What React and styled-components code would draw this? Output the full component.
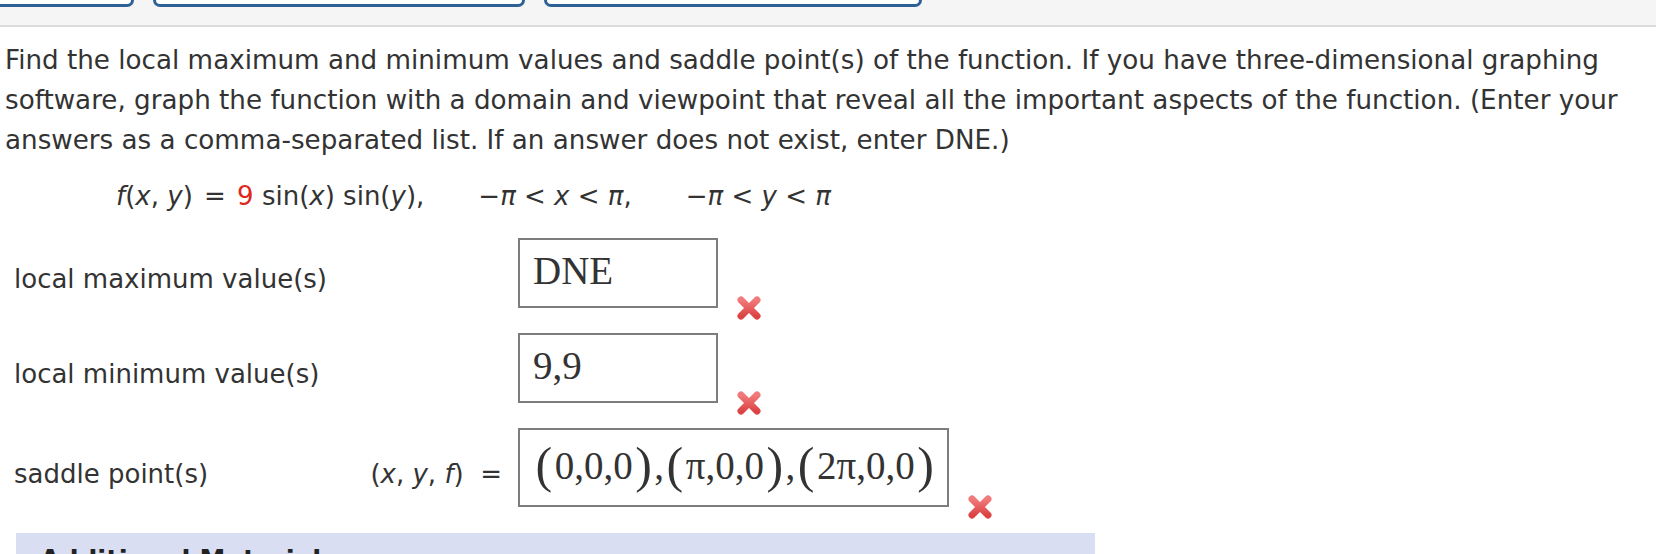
import React from "react";
import styled, { createGlobalStyle } from "styled-components";

const GlobalStyle = createGlobalStyle`
  body {
    margin: 0;
    background: #fff;
    font-family: "DejaVu Sans", Verdana, sans-serif;
    color: #333;
  }
`;

const Page = styled.div`
  width: 1656px;
  height: 554px;
  overflow: hidden;
`;

const TopBar = styled.div`
  display: flex;
  gap: 19px;
  height: 25px;
  background: #f5f5f5;
  border-bottom: 2px solid #dcdcdc;
  margin-left: -20px;
`;

const Tab = styled.div`
  box-sizing: border-box;
  width: ${(props) => props.w}px;
  height: 7px;
  border: 3px solid #2d6095;
  border-top: none;
  border-radius: 0 0 8px 8px;
  background: #fff;
`;

const Question = styled.p`
  margin: 13px 0 0 0;
  padding: 0 20px 0 5px;
  font-size: 26.2px;
  line-height: 40px;
`;

const Formula = styled.div`
  display: flex;
  align-items: baseline;
  margin: 16px 0 0 116px;
  font-size: 26px;
  line-height: 40px;
`;

const Part = styled.span`
  margin-left: ${(props) => props.gap || 0}px;
  white-space: pre;
`;

const Op = styled.span`
  margin: 0 ${(props) => (props.wide ? 3 : 0)}px;
`;

const I = styled.i`
  font-style: italic;
`;

const Red = styled.span`
  color: #e0271b;
`;

const Answers = styled.div`
  display: flex;
  flex-direction: column;
  gap: 25px;
  margin-top: 22px;
`;

const Row = styled.div`
  display: flex;
  align-items: center;
`;

const Label = styled.div`
  width: 340px;
  padding: 12px 0 0 14px;
  font-size: 26px;
`;

const Prefix = styled.div`
  width: 148px;
  padding: 12px 16px 0 0;
  text-align: right;
  font-size: 26px;
  white-space: pre;
`;

const Box = styled.div`
  box-sizing: border-box;
  width: ${(props) => props.w}px;
  height: ${(props) => props.h}px;
  border: 2px solid #7d7d7d;
  padding: 0 0 5px 13px;
  display: flex;
  align-items: center;
  font-family: "Liberation Serif", "Times New Roman", serif;
  font-size: 39px;
  color: #333;
  white-space: pre;
`;

const Paren = styled.span`
  font-size: 50px;
  display: inline-block;
  margin: 0 2.5px;
`;

const Mark = styled.svg`
  align-self: flex-end;
  margin: 0 0 -13px 17px;
  flex: none;
`;

const Materials = styled.div`
  margin: 26px 0 0 16px;
  width: 1079px;
  height: 60px;
  background: #d9def3;
  box-sizing: border-box;
  padding: 12px 0 0 24px;
  font-size: 26px;
  font-weight: bold;
  color: #222;
`;

const Cross = () => (
  <Mark width="28" height="26" viewBox="0 0 28 26">
    <defs>
      <linearGradient id="xg" x1="0" y1="0" x2="0" y2="1">
        <stop offset="0" stopColor="#f27a7a" />
        <stop offset="1" stopColor="#dc4444" />
      </linearGradient>
    </defs>
    <path
      d="M6 5 L22 21 M22 5 L6 21"
      stroke="url(#xg)"
      strokeWidth="7"
      strokeLinecap="round"
      fill="none"
    />
  </Mark>
);

const Tuple = ({ first }) => (
  <>
    <Paren>(</Paren>
    {first},0,0
    <Paren>)</Paren>
  </>
);

const App = () => {
  return (
    <Page>
      <GlobalStyle />
      <TopBar>
        <Tab w={154} />
        <Tab w={372} />
        <Tab w={378} />
      </TopBar>
      <Question>
        Find the local maximum and minimum values and saddle point(s) of the
        function. If you have three-dimensional graphing software, graph the
        function with a domain and viewpoint that reveal all the important
        aspects of the function. (Enter your answers as a comma-separated list.
        If an answer does not exist, enter DNE.)
      </Question>
      <Formula>
        <Part>
          <I>f</I>(<I>x</I>, <I>y</I>) <Op wide>=</Op> <Red>9</Red> sin(<I>x</I>) sin(<I>y</I>),
        </Part>
        <Part gap={54}>
          −<I>π</I> <Op>&lt;</Op> <I>x</I> <Op>&lt;</Op> <I>π</I>,
        </Part>
        <Part gap={54}>
          −<I>π</I> <Op>&lt;</Op> <I>y</I> <Op>&lt;</Op> <I>π</I>
        </Part>
      </Formula>
      <Answers>
        <Row>
          <Label>local maximum value(s)</Label>
          <Prefix> </Prefix>
          <Box w={200} h={70}>DNE</Box>
          <Cross />
        </Row>
        <Row>
          <Label>local minimum value(s)</Label>
          <Prefix> </Prefix>
          <Box w={200} h={70}>9,9</Box>
          <Cross />
        </Row>
        <Row>
          <Label>saddle point(s)</Label>
          <Prefix>
            (<I>x</I>, <I>y</I>, <I>f</I>)  =
          </Prefix>
          <Box w={431} h={79}>
            <Tuple first="0" />,<Tuple first="π" />,<Tuple first="2π" />
          </Box>
          <Cross />
        </Row>
      </Answers>
      <Materials>Additional Materials</Materials>
    </Page>
  );
};

export default App;
